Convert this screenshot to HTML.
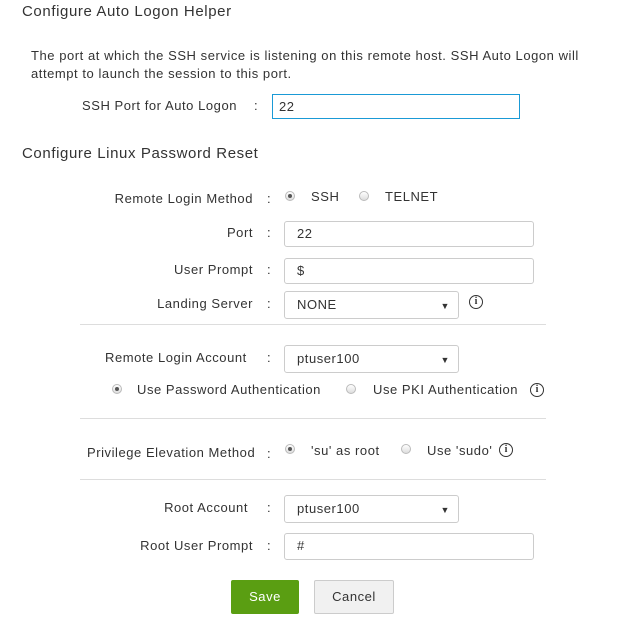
<!DOCTYPE html>
<html><head><meta charset="utf-8"><style>
body{margin:0;width:627px;height:625px;background:#fff;font-family:"Liberation Sans",sans-serif;font-size:13px;letter-spacing:0.55px;color:#333;position:relative;overflow:hidden}
.a{position:absolute;white-space:nowrap;line-height:16px}
.r{text-align:right}
.h{font-size:15px;color:#333;letter-spacing:0.6px}
.in{position:absolute;box-sizing:border-box;border:1px solid #ccc;border-radius:3px;background:#fff;padding-left:12px;line-height:24px}
.sel:after{content:"▼";position:absolute;right:8px;top:1px;font-size:9px;color:#333}
.rad{position:absolute;width:10px;height:10px;border-radius:50%;border:1px solid #bbb;background:linear-gradient(#fff,#ddd);box-sizing:border-box}
.rad.on:after{content:"";position:absolute;left:2px;top:2px;width:4px;height:4px;border-radius:50%;background:#555}
.info{position:absolute;width:14px;height:14px;border:1.3px solid #333;border-radius:50%;box-sizing:border-box;font:bold 10px "Liberation Serif",serif;text-align:center;line-height:12px;letter-spacing:0}
.hr{position:absolute;left:80px;width:466px;height:1px;background:#ddd}
</style></head><body>
<div class="a h" style="left:22px;top:4px">Configure Auto Logon Helper</div>
<div class="a" style="left:31px;top:47px;line-height:18px">The port at which the SSH service is listening on this remote host. SSH Auto Logon will<br>attempt to launch the session to this port.</div>
<div class="a" style="left:82px;top:98px">SSH Port for Auto Logon</div>
<div class="a" style="left:254px;top:98px">:</div>
<div class="in" style="left:272px;top:94px;width:248px;height:25px;border-color:#1a9ad6;border-radius:0;padding-left:6px;line-height:23px">22</div>
<div class="a h" style="left:22px;top:146px">Configure Linux Password Reset</div>

<div class="a r" style="right:374px;top:191px">Remote Login Method</div>
<div class="a" style="left:267px;top:191px">:</div>
<div class="rad on" style="left:285px;top:191px"></div><div class="a" style="left:311px;top:189px">SSH</div>
<div class="rad" style="left:359px;top:191px"></div><div class="a" style="left:385px;top:189px">TELNET</div>

<div class="a r" style="right:374px;top:225px">Port</div><div class="a" style="left:267px;top:225px">:</div>
<div class="in" style="left:284px;top:221px;width:250px;height:26px">22</div>
<div class="a r" style="right:374px;top:262px">User Prompt</div><div class="a" style="left:267px;top:262px">:</div>
<div class="in" style="left:284px;top:258px;width:250px;height:26px">$</div>
<div class="a r" style="right:374px;top:296px">Landing Server</div><div class="a" style="left:267px;top:296px">:</div>
<div class="in sel" style="left:284px;top:291px;width:175px;height:28px;line-height:26px">NONE</div>
<div class="info" style="left:469px;top:295px">i</div>
<div class="hr" style="top:324px"></div>

<div class="a" style="left:105px;top:350px">Remote Login Account</div><div class="a" style="left:267px;top:350px">:</div>
<div class="in sel" style="left:284px;top:345px;width:175px;height:28px;line-height:26px">ptuser100</div>
<div class="rad on" style="left:112px;top:384px"></div><div class="a" style="left:137px;top:382px">Use Password Authentication</div>
<div class="rad" style="left:346px;top:384px"></div><div class="a" style="left:373px;top:382px">Use PKI Authentication</div>
<div class="info" style="left:530px;top:383px">i</div>
<div class="hr" style="top:418px"></div>

<div class="a" style="left:87px;top:445px">Privilege Elevation Method</div><div class="a" style="left:267px;top:446px">:</div>
<div class="rad on" style="left:285px;top:444px"></div><div class="a" style="left:311px;top:443px">'su' as root</div>
<div class="rad" style="left:401px;top:444px"></div><div class="a" style="left:427px;top:443px">Use 'sudo'</div>
<div class="info" style="left:499px;top:443px">i</div>
<div class="hr" style="top:479px"></div>

<div class="a r" style="right:379px;top:500px">Root Account</div><div class="a" style="left:267px;top:500px">:</div>
<div class="in sel" style="left:284px;top:495px;width:175px;height:28px;line-height:26px">ptuser100</div>
<div class="a r" style="right:374px;top:538px">Root User Prompt</div><div class="a" style="left:267px;top:538px">:</div>
<div class="in" style="left:284px;top:533px;width:250px;height:27px">#</div>

<div style="position:absolute;left:231px;top:580px;width:68px;height:34px;background:#5a9e12;border-radius:2px;color:#fff;text-align:center;line-height:34px">Save</div>
<div style="position:absolute;left:314px;top:580px;width:80px;height:34px;box-sizing:border-box;background:#f1f1f1;border:1px solid #ccc;border-radius:2px;text-align:center;line-height:32px">Cancel</div>
</body></html>
